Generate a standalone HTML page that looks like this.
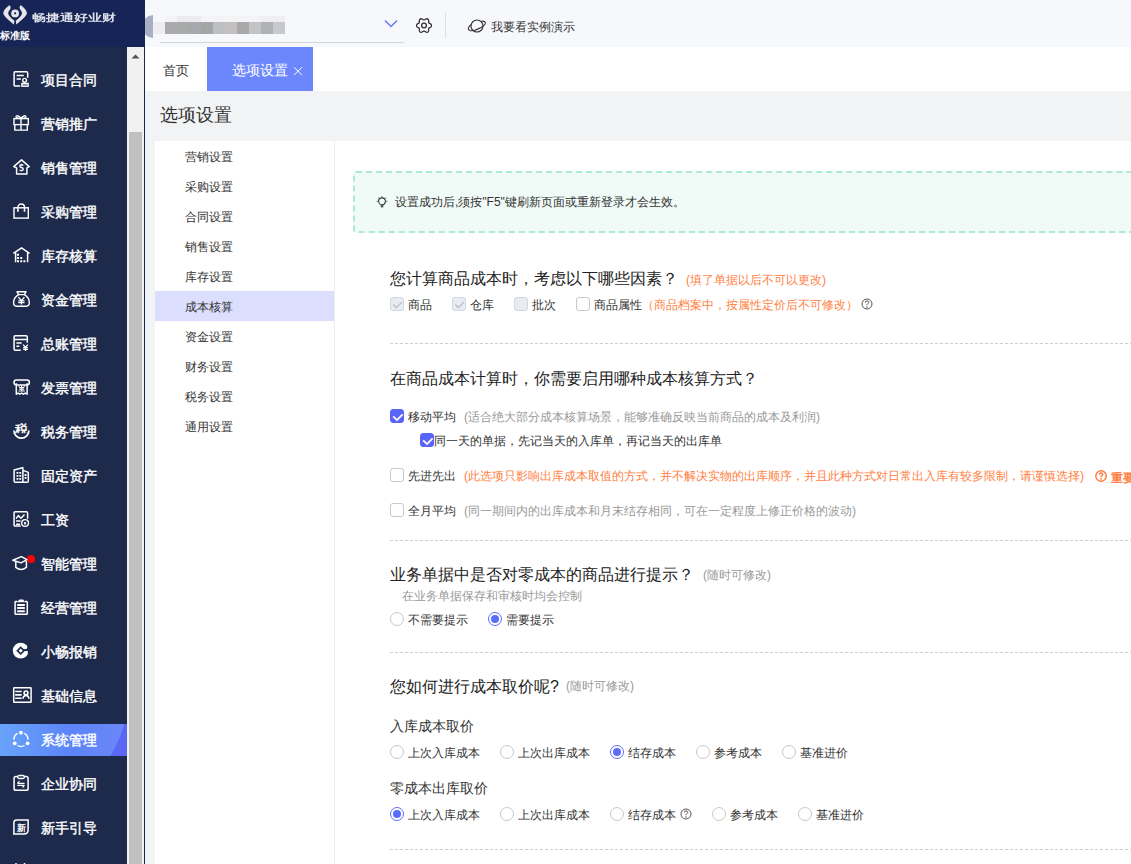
<!DOCTYPE html>
<html><head><meta charset="utf-8">
<style>
*{box-sizing:border-box;margin:0;padding:0}
html,body{width:1131px;height:864px;overflow:hidden;background:#fff;font-family:"Liberation Sans",sans-serif;color:#333}
.abs{position:absolute}
#side{position:absolute;left:0;top:0;width:145px;height:864px;background:#1e2a4c;overflow:hidden}
#logo{position:absolute;left:0;top:0;width:145px;height:47px;background:#162456}
.mi{position:absolute;left:0;width:127px;height:32px}
.mi.act{overflow:hidden;background:#5a66f5}
.mi.act::before{content:"";position:absolute;left:-123px;top:-160px;width:252px;height:252px;border-radius:50%;background:linear-gradient(90deg,#68a3f9 0,#68a3f9 123px,#5c84f8 195px,#6c88f8 250px)}
.mi .ic{z-index:1;position:absolute;left:13px;top:7px;width:16px;height:16px;overflow:visible}
.mi .tx{z-index:1;position:absolute;left:41px;top:0;line-height:32px;font-size:14px;color:#fff;white-space:nowrap;font-weight:normal;-webkit-text-stroke:0.4px #fff}
#sb{position:absolute;left:127px;top:47px;width:17px;height:817px;background:#f1f1f1}
#thumb{position:absolute;left:129px;top:132px;width:13px;height:732px;background:#c1c1c1}
#sbline{position:absolute;left:144px;top:0;width:1px;height:864px;background:#162456}
#top{position:absolute;left:145px;top:0;width:986px;height:47px;background:#f7f8fc}
#tabs{position:absolute;left:145px;top:47px;width:986px;height:44px;background:#fff}
#ttl{position:absolute;left:145px;top:91px;width:986px;height:50px;background:#f2f3f5}
#wrap{position:absolute;left:145px;top:141px;width:986px;height:723px;background:#f2f3f5}
#sub{position:absolute;left:155px;top:141px;width:179px;height:723px;background:#fff}
#subline{position:absolute;left:334px;top:141px;width:1px;height:723px;background:#eeeeee}
#main{position:absolute;left:335px;top:141px;width:796px;height:723px;background:#fff}
.si{position:absolute;left:155px;width:179px;height:30px;line-height:30px;font-size:12px;color:#333;padding:1px 0 0 30px}
.si.on{background:#dbdefd}
.t{position:absolute;white-space:nowrap;line-height:20px}
.q{font-size:16px;color:#222;line-height:24px}
.s12{font-size:12px;line-height:18px}
.gray{color:#999}
.org{color:#ff7f3f}
.dash{position:absolute;left:390px;width:741px;height:1px;background:repeating-linear-gradient(90deg,#c4d4d4 0 3px,transparent 3px 5px)}
.cb{position:absolute;width:14px;height:14px;border:1px solid #c8c8c8;border-radius:3px;background:#fff}
.cb.dis{background:#e9ecf3;border-color:#d2d6de}
.cb.on{background:#5865f8;border-color:#5865f8}
.rd{position:absolute;width:14px;height:14px;border:1px solid #c8c8c8;border-radius:50%;background:#fff}
.rd.on{border-color:#5b6cf9}
.rd.on::after{content:"";position:absolute;left:2px;top:2px;width:8px;height:8px;border-radius:50%;background:#5b6cf9}
</style></head><body>
<div id="side">
  <div id="logo">
    <svg class="abs" style="left:0;top:0" width="32" height="30" viewBox="0 0 32 30">
      <path id="lw" d="M9.4 5.2C7 7 3.3 10 3.3 13.2C3.5 16 10 21 13.9 24.6L14.4 20.8C11 18 8.2 15.5 8.2 13.2C8.2 11 10.6 9.5 10.6 8C10.8 6.5 10.2 5.5 9.4 5.2Z" fill="#e6e6ea"/>
      <path d="M20.8 5.2C23.2 7 26.9 10 26.9 13.2C26.7 16 20.2 21 16.3 24.6L15.8 20.8C19.2 18 22 15.5 22 13.2C22 11 19.6 9.5 19.6 8C19.4 6.5 20 5.5 20.8 5.2Z" fill="#e6e6ea"/>
      <circle cx="15.1" cy="13.4" r="3.9" fill="#e6e6ea"/><circle cx="15.1" cy="13.3" r="1.1" fill="#162456"/>
    </svg>
    <div class="abs" style="left:32px;top:9px;font-size:14px;color:#e2e2ea;line-height:16px;white-space:nowrap;transform:scaleY(0.72);transform-origin:0 50%;font-weight:bold">畅捷通好业财</div>
    <div class="abs" style="left:0px;top:29px;font-size:10px;color:#fff;font-weight:bold;line-height:14px;white-space:nowrap">标准版</div>
  </div>
<div class="mi" style="top:64px"><svg class="ic" viewBox="0 0 16 16"><path d="M7.2 15.1H2.3Q1.1 15.1 1.1 13.9V2Q1.1 0.8 2.3 0.8H13.5Q14.7 0.8 14.7 2V6.7" stroke="#fff" fill="none" stroke-width="1.5"/><path d="M3.6 4.6h7.2M3.6 8h4.3" stroke="#fff" fill="none" stroke-width="1.5"/><circle cx="11.6" cy="9.3" r="1.9" stroke="#fff" fill="none" stroke-width="1.4"/><rect x="8.9" y="12.5" width="6.2" height="2.7" stroke="#fff" fill="none" stroke-width="1.4"/><rect x="10" y="13.4" width="4" height="1" fill="#b8bccb"/></svg><div class="tx">项目合同</div></div>
<div class="mi" style="top:108px"><svg class="ic" viewBox="0 0 16 16"><rect x="1" y="3.6" width="14.3" height="6" stroke="#fff" fill="none" stroke-width="1.4"/><path d="M1.8 9.6V15.1H14.3V9.6M8 3.6V15.1" stroke="#fff" fill="none" stroke-width="1.4"/><path d="M8 3.6C6.5 1.2 4.5 0.3 3.4 1S3.3 3.3 8 3.6C9.5 1.2 11.5 0.3 12.6 1S12.7 3.3 8 3.6" stroke="#fff" fill="none" stroke-width="1.3"/></svg><div class="tx">营销推广</div></div>
<div class="mi" style="top:152px"><svg class="ic" viewBox="0 0 16 16"><path d="M8.5 0.9L16.2 7.6L13.9 8.9V15.1H3.6V8.9L0.8 7.6Z" stroke="#fff" fill="none" stroke-width="1.5" stroke-linejoin="round"/><path d="M10.1 6.7Q9.7 5.7 8.4 5.7Q6.8 5.7 6.8 7Q6.8 8.2 8.5 8.5Q10.2 8.9 10.2 10.2Q10.2 11.6 8.4 11.6Q7 11.6 6.7 10.6M8.5 4.7v1M8.5 11.6v1" stroke="#fff" fill="none" stroke-width="1.4"/></svg><div class="tx">销售管理</div></div>
<div class="mi" style="top:196px"><svg class="ic" viewBox="0 0 16 16"><rect x="1" y="4.8" width="14.3" height="10.3" stroke="#fff" fill="none" stroke-width="1.4"/><path d="M4.9 7.9V4.3A3.3 3.3 0 0 1 11.5 4.3V7.9" stroke="#fff" fill="none" stroke-width="1.4"/><circle cx="4.9" cy="7.9" r="0.9" fill="#fff"/><circle cx="11.5" cy="7.9" r="0.9" fill="#fff"/></svg><div class="tx">采购管理</div></div>
<div class="mi" style="top:240px"><svg class="ic" viewBox="0 0 16 16"><path d="M0.4 6.3L8.5 0.9L16.6 6.3M2.6 5V15.3M14.6 5V15.3" stroke="#fff" fill="none" stroke-width="1.5"/><path d="M4 6.8h2v1.9H4zM4 10h2v2H4zM7.2 10h2v2H7.2zM4 13.3h2v2H4zM7.2 13.3h2v2H7.2zM10.4 13.3h2v2h-2z" fill="#fff"/></svg><div class="tx">库存核算</div></div>
<div class="mi" style="top:284px"><svg class="ic" viewBox="0 0 16 16"><path d="M4 0.8H13L11.3 3.6H5.7Z" stroke="#fff" fill="none" stroke-width="1.4" stroke-linejoin="round"/><path d="M5.6 3.6Q0.6 6.5 0.6 11.5Q0.6 15.2 3.5 15.2H13.4Q16.3 15.2 16.3 11.5Q16.3 6.5 11.4 3.6" stroke="#fff" fill="none" stroke-width="1.4"/><path d="M5.4 6.2l3 3.4 3-3.4M8.4 9.6v4M5.3 9.9h6.2M5.3 11.6h6.2" stroke="#fff" fill="none" stroke-width="1.3"/></svg><div class="tx">资金管理</div></div>
<div class="mi" style="top:328px"><svg class="ic" viewBox="0 0 16 16"><path d="M7.7 15.3H2.3Q1.07 15.3 1.07 14V2.1Q1.07 0.8 2.3 0.8H13.1Q14.3 0.8 14.3 2.1V7.7" stroke="#fff" fill="none" stroke-width="1.5"/><path d="M1.07 4.6H14.3M3.4 7.95h5.2M3.4 11.3h3" stroke="#fff" fill="none" stroke-width="1.5"/><path d="M10.1 9.6l2.4 2.6 2.4-2.6M12.5 12.2v3.7M10.1 12.6h4.8M10.1 14.3h4.8" stroke="#fff" fill="none" stroke-width="1.3"/></svg><div class="tx">总账管理</div></div>
<div class="mi" style="top:372px"><svg class="ic" viewBox="0 0 16 16"><rect x="1" y="1" width="15.4" height="4.9" rx="2.4" stroke="#fff" fill="none" stroke-width="1.5"/><path d="M3.3 4.2V15.2L5.1 14.1 6.9 15.2 8.7 14.1 10.5 15.2 12.3 14.1 14.1 15.2V4.2" stroke="#fff" fill="none" stroke-width="1.5" stroke-linejoin="round"/><path d="M5.6 6.6L6.6 7.6M11.8 6.6L10.8 7.6M8.7 6.3V12.2M6.2 8.6h5M6.2 10.2h5M5.6 12h6.2" stroke="#fff" fill="none" stroke-width="1.1"/></svg><div class="tx">发票管理</div></div>
<div class="mi" style="top:416px"><svg class="ic" viewBox="0 0 16 16"><defs><clipPath id="c8"><rect x="0" y="-1" width="17" height="11.3"/></clipPath></defs><path d="M0.9 7.4A7.5 7.8 0 0 0 15.9 7.4" stroke="#fff" fill="none" stroke-width="1.7"/><text x="8.3" y="11.2" font-size="12.5" text-anchor="middle" fill="#fff" font-weight="bold" clip-path="url(#c8)">税</text></svg><div class="tx">税务管理</div></div>
<div class="mi" style="top:460px"><svg class="ic" viewBox="0 0 16 16"><path d="M10.5 0.5L1.1 3V14Q1.1 15.3 2.4 15.3H14Q15.3 15.3 15.3 14V5.4L10.2 3.4M9.9 1V15" stroke="#fff" fill="none" stroke-width="1.5" stroke-linejoin="round"/><path d="M3.5 5h1.9v1.8H3.5zM6.3 5h1.9v1.8H6.3zM3.5 7.9h1.9v1.8H3.5zM6.3 7.9h1.9v1.8H6.3zM3.5 10.9h1.9v1.8H3.5zM6.3 10.9h1.9v1.8H6.3zM11.6 7.1h1.9v1.8h-1.9zM11.6 9.9h1.9v1.8h-1.9z" fill="#fff"/></svg><div class="tx">固定资产</div></div>
<div class="mi" style="top:504px"><svg class="ic" viewBox="0 0 16 16"><path d="M7.7 15.1H2.3Q1.07 15.1 1.07 13.9V2.1Q1.07 0.8 2.3 0.8H13.3Q14.6 0.8 14.6 2.1V7.7" stroke="#fff" fill="none" stroke-width="1.5"/><path d="M3.1 7.4L5.4 4.6L8 7.2L11.5 3.4M3.1 10h4.4M3.1 13.3h4" stroke="#fff" fill="none" stroke-width="1.5"/><circle cx="12.1" cy="12" r="3.4" stroke="#fff" fill="none" stroke-width="1.4"/><path d="M11 10.8l1.1 1.3 1.1-1.3M12.1 12.1v1.9M11 12.6h2.2" stroke="#fff" fill="none" stroke-width="0.9"/></svg><div class="tx">工资</div></div>
<div class="mi" style="top:548px"><svg class="ic" viewBox="0 0 16 16"><path d="M-0.2 5.2L8.4 1.6L13.9 4.6L8.1 7.9Z" stroke="#fff" fill="none" stroke-width="1.5" stroke-linejoin="round"/><path d="M2.8 6.3V12.3Q8 16.5 13.4 12.3V6" stroke="#fff" fill="none" stroke-width="1.5"/></svg><div class="tx">智能管理</div></div>
<div class="mi" style="top:592px"><svg class="ic" viewBox="0 0 16 16"><path d="M4.6 2.4H2.8Q2.1 2.4 2.1 3.2V14.5Q2.1 15.3 2.8 15.3H13.6Q14.3 15.3 14.3 14.5V3.2Q14.3 2.4 13.6 2.4H11.8" stroke="#fff" fill="none" stroke-width="1.5"/><path d="M4.4 3.2L6.3 0.4H10.2L12 3.2Z" fill="#fff"/><path d="M4.2 6h7.6M4.2 9h7.6M4.2 12.3h7.6" stroke="#fff" fill="none" stroke-width="1.9"/></svg><div class="tx">经营管理</div></div>
<div class="mi" style="top:636px"><svg class="ic" viewBox="0 0 16 16"><defs><mask id="m13" maskUnits="userSpaceOnUse" x="-2" y="-2" width="20" height="20"><rect x="-2" y="-2" width="20" height="20" fill="#fff"/><path d="M3.3 7.7L7.7 3.3L12.1 7.7L7.7 12.1Z" fill="#000"/><path d="M7.7 7.95H19V-1Z" fill="#000"/><rect x="14.8" y="7" width="4" height="10" fill="#000"/></mask></defs><circle cx="7.7" cy="7.7" r="7.9" fill="#fff" mask="url(#m13)"/><circle cx="12.2" cy="4.1" r="2.2" fill="#fff"/><path d="M5.6 7.7L7.7 5.6L9.8 7.7L7.7 9.8Z" fill="#fff"/></svg><div class="tx">小畅报销</div></div>
<div class="mi" style="top:680px"><svg class="ic" viewBox="0 0 16 16"><rect x="0.7" y="0.7" width="17.4" height="14.6" rx="0.6" stroke="#fff" fill="none" stroke-width="1.5"/><path d="M2.2 4.5h6.5M2.2 7.9h6.5M2.2 11.3h6.5" stroke="#fff" fill="none" stroke-width="1.6"/><circle cx="13" cy="5.9" r="1.9" stroke="#fff" fill="none" stroke-width="1.6"/><path d="M10 11.8Q10.2 8.4 13 8.4Q15.8 8.4 16 11.8" stroke="#fff" fill="none" stroke-width="1.5"/></svg><div class="tx">基础信息</div></div>
<div class="mi act" style="top:724px"><svg class="ic" viewBox="0 0 16 16"><path d="M4.6 2.4A7 7 0 0 0 0.9 8.8M15 8.8A7 7 0 0 0 11.3 2.4M4.4 14.5A7 7 0 0 0 11.5 14.5" stroke="#fff" fill="none" stroke-width="1.4"/><circle cx="7.95" cy="1.7" r="1.9" fill="#fff"/><circle cx="1.7" cy="12.3" r="1.9" fill="#fff"/><circle cx="14.6" cy="12.3" r="1.9" fill="#fff"/></svg><div class="tx">系统管理</div></div>
<div class="mi" style="top:768px"><svg class="ic" viewBox="0 0 16 16"><path d="M4.2 1.6H3Q1.07 1.6 1.07 3.4V13.4Q1.07 15.3 3 15.3H13.2Q15.1 15.3 15.1 13.4V3.4Q15.1 1.6 13.2 1.6H11.7" stroke="#fff" fill="none" stroke-width="1.5"/><rect x="4.6" y="0.5" width="6.8" height="3" rx="1.5" stroke="#fff" fill="none" stroke-width="1.3"/><path d="M4.3 8.4H11.6M4.5 8.4L6.5 6.2M4.3 10.4H11.6M11.4 10.4L9.5 12.5" stroke="#fff" fill="none" stroke-width="1.15"/></svg><div class="tx">企业协同</div></div>
<div class="mi" style="top:812px"><svg class="ic" viewBox="0 0 16 16"><path d="M3.5 0.9H15.1V11Q15.1 15 11 15H0.9V3.5Q0.9 0.9 3.5 0.9Z" stroke="#fff" fill="none" stroke-width="1.5"/><text x="8" y="11.6" font-size="8.5" text-anchor="middle" fill="#fff" font-weight="bold">新</text></svg><div class="tx">新手引导</div></div>
<div class="mi" style="top:856px"><svg class="ic" viewBox="0 0 16 16"><path d="M3 0v3M11.5 0v3" stroke="#fff" fill="none" stroke-width="1.5"/></svg><div class="tx">更多</div></div>
<div class="abs" style="left:27px;top:555px;width:8px;height:8px;border-radius:50%;background:#fd0202"></div>
</div>
<div id="sb"><svg class="abs" style="left:4px;top:7px" width="9" height="5" viewBox="0 0 9 5"><path d="M0.5 4.5L4.5 0.5L8.5 4.5z" fill="#505050"/></svg></div>
<div id="thumb"></div>
<div id="sbline"></div>
<div id="top">
  <div class="abs" style="left:0;top:15px;width:8px;height:23px;overflow:hidden"><div style="position:absolute;left:-3px;top:0;width:23px;height:23px;border-radius:50%;background:#a9b0c6"></div></div>
  <div class="abs" style="left:15px;top:42px;width:244px;height:1px;background:#d4d6dc"></div>
  <div class="abs" style="left:20px;top:16px;width:120px;height:6px;background:#f4f4f7"></div><div class="abs" style="left:32px;top:16px;width:24px;height:6px;background:#ececef"></div><div class="abs" style="left:116px;top:16px;width:24px;height:6px;background:#efeff2"></div>
  <div class="abs" style="left:8px;top:22px;width:12px;height:12px;background:#ededef"></div>
  <div class="abs" style="left:20px;top:22px;width:12px;height:12px;background:#aaaaac"></div>
  <div class="abs" style="left:32px;top:22px;width:12px;height:12px;background:#a9abaa"></div>
  <div class="abs" style="left:44px;top:22px;width:12px;height:12px;background:#a5a8ad"></div>
  <div class="abs" style="left:56px;top:22px;width:12px;height:12px;background:#a4a5a7"></div>
  <div class="abs" style="left:68px;top:22px;width:12px;height:12px;background:#bdbfc1"></div>
  <div class="abs" style="left:80px;top:22px;width:12px;height:12px;background:#c4c0c1"></div>
  <div class="abs" style="left:92px;top:22px;width:12px;height:12px;background:#a9a9ab"></div>
  <div class="abs" style="left:104px;top:22px;width:12px;height:12px;background:#c3c5c4"></div>
  <div class="abs" style="left:116px;top:22px;width:12px;height:12px;background:#afb2b5"></div>
  <div class="abs" style="left:128px;top:22px;width:12px;height:12px;background:#c7c9ce"></div>
  <svg class="abs" style="left:239px;top:19px" width="14" height="9" viewBox="0 0 14 9"><path d="M1 1.5L7 7.5L13 1.5" fill="none" stroke="#6877f4" stroke-width="1.5"/></svg>
  <svg class="abs" style="left:271px;top:18px" width="16" height="15" viewBox="0 0 16 15"><path d="M15.60 7.50 L15.44 8.15 L14.99 8.73 L14.38 9.21 L13.73 9.59 L13.20 9.92 L12.85 10.30 L12.70 10.79 L12.67 11.42 L12.67 12.17 L12.56 12.94 L12.28 13.62 L11.80 14.08 L11.16 14.27 L10.43 14.17 L9.71 13.88 L9.06 13.51 L8.50 13.21 L8.00 13.10 L7.50 13.21 L6.94 13.51 L6.29 13.88 L5.57 14.17 L4.84 14.27 L4.20 14.08 L3.72 13.62 L3.44 12.94 L3.33 12.17 L3.33 11.42 L3.30 10.79 L3.15 10.30 L2.80 9.92 L2.27 9.59 L1.62 9.21 L1.01 8.73 L0.56 8.15 L0.40 7.50 L0.56 6.85 L1.01 6.27 L1.62 5.79 L2.27 5.41 L2.80 5.08 L3.15 4.70 L3.30 4.21 L3.33 3.58 L3.33 2.83 L3.44 2.06 L3.72 1.38 L4.20 0.92 L4.84 0.73 L5.57 0.83 L6.29 1.12 L6.94 1.49 L7.50 1.79 L8.00 1.90 L8.50 1.79 L9.06 1.49 L9.71 1.12 L10.43 0.83 L11.16 0.73 L11.80 0.92 L12.28 1.38 L12.56 2.06 L12.67 2.83 L12.67 3.58 L12.70 4.21 L12.85 4.70 L13.20 5.08 L13.73 5.41 L14.38 5.79 L14.99 6.27 L15.44 6.85 L15.60 7.50Z" fill="none" stroke="#333" stroke-width="1.3" stroke-linejoin="round"/><circle cx="8" cy="7.5" r="2.4" fill="none" stroke="#333" stroke-width="1.3"/></svg>
  <div class="abs" style="left:300px;top:13px;width:1px;height:25px;background:#dcdde2"></div>
  <svg class="abs" style="left:322px;top:18px" width="20" height="16" viewBox="0 0 20 16"><circle cx="10" cy="8" r="6" fill="none" stroke="#333" stroke-width="1.1"/><path d="M4.2 6.5Q-1 11 3 12.5Q7 13.5 14 9.5Q20.5 5.5 17.5 3.5Q16 2.8 14.5 3.3" fill="none" stroke="#333" stroke-width="1.1"/></svg>
  <div class="abs" style="left:346px;top:18px;font-size:12px;color:#333;line-height:18px;white-space:nowrap">我要看实例演示</div>
</div>
<div id="tabs">
  <div class="abs" style="left:18px;top:15px;font-size:13px;color:#333;line-height:18px">首页</div>
  <div class="abs" style="left:62px;top:0;width:106px;height:44px;background:#6c87fd"></div>
  <div class="abs" style="left:87px;top:14px;font-size:14px;color:#fff;line-height:18px;white-space:nowrap">选项设置</div>
  <svg class="abs" style="left:148px;top:19px" width="10" height="10" viewBox="0 0 10 10"><path d="M1 1.2L9 9.2M9 1.2L1 9.2" stroke="#fff" stroke-width="1"/></svg>
</div>
<div id="ttl"><div class="abs" style="left:15px;top:12px;font-size:18px;color:#333;line-height:24px">选项设置</div></div>
<div id="wrap"></div>
<div id="sub"></div>
<div id="subline"></div>
<div id="main"></div>
<div class="si" style="top:141px">营销设置</div>
<div class="si" style="top:171px">采购设置</div>
<div class="si" style="top:201px">合同设置</div>
<div class="si" style="top:231px">销售设置</div>
<div class="si" style="top:261px">库存设置</div>
<div class="si on" style="top:291px">成本核算</div>
<div class="si" style="top:321px">资金设置</div>
<div class="si" style="top:351px">财务设置</div>
<div class="si" style="top:381px">税务设置</div>
<div class="si" style="top:411px">通用设置</div>
<div class="abs" style="left:353px;top:171px;width:800px;height:62px;background:#f0faf6;border:2px dashed #ade9cc;border-radius:3px"></div>
<svg class="abs" style="left:375px;top:194px" width="14" height="16" viewBox="0 0 14 16"><circle cx="7" cy="7.3" r="3.4" fill="none" stroke="#333" stroke-width="1.1"/><path d="M5.6 10.9h2.8v1.5q0 1-1 1h-.8q-1 0-1-1z" fill="#555"/><path d="M7 2.2v1M1.6 7.3h1.1M11.3 7.3h1.1M3.2 3.5l.7.7M10.8 3.5l-.7.7" stroke="#555" stroke-width="1"/></svg>
<div class="t s12" style="left:395px;top:193px;color:#333">设置成功后,须按"F5"键刷新页面或重新登录才会生效。</div>
<div class="t q" style="left:390px;top:267px;">您计算商品成本时，考虑以下哪些因素？</div>
<div class="t s12 org" style="left:686px;top:271px;">(填了单据以后不可以更改)</div>
<div class="cb dis chk" style="left:390px;top:297px"><svg width="14" height="14" viewBox="0 0 14 14" style="position:absolute;left:-1px;top:-1px"><path d="M3.2 7.4L6.4 10.6L12 5" fill="none" stroke="#c2c4c9" stroke-width="1.5"/></svg></div>
<div class="t s12" style="left:408px;top:296px;">商品</div>
<div class="cb dis chk" style="left:452px;top:297px"><svg width="14" height="14" viewBox="0 0 14 14" style="position:absolute;left:-1px;top:-1px"><path d="M3.2 7.4L6.4 10.6L12 5" fill="none" stroke="#c2c4c9" stroke-width="1.5"/></svg></div>
<div class="t s12" style="left:470px;top:296px;">仓库</div>
<div class="cb dis" style="left:514px;top:297px"></div>
<div class="t s12" style="left:532px;top:296px;">批次</div>
<div class="cb " style="left:576px;top:297px"></div>
<div class="t s12" style="left:594px;top:296px;">商品属性</div>
<div class="t s12 org" style="left:642px;top:296px;">（商品档案中，按属性定价后不可修改）</div>
<svg class="abs" style="left:861px;top:298px;overflow:visible" width="12" height="12" viewBox="0 0 12 12"><circle cx="6" cy="6" r="5.0" fill="none" stroke="#555" stroke-width="1"/><path d="M4.3 4.6Q4.3 2.9 6 2.9Q7.7 2.9 7.7 4.5Q7.7 5.4 6.6 5.9Q6 6.2 6 7.2" fill="none" stroke="#555" stroke-width="1"/><circle cx="6" cy="8.9" r="0.75" fill="#555"/></svg>
<div class="dash" style="top:343px"></div>
<div class="t q" style="left:390px;top:367px;">在商品成本计算时，你需要启用哪种成本核算方式？</div>
<div class="cb on" style="left:390px;top:409px"><svg width="14" height="14" viewBox="0 0 14 14" style="position:absolute;left:-1px;top:-1px"><path d="M3.2 7.4L7 11.1L12.6 5.4" fill="none" stroke="#fff" stroke-width="1.8"/></svg></div>
<div class="t s12" style="left:408px;top:408px;">移动平均</div>
<div class="t s12 gray" style="left:464px;top:408px;">(适合绝大部分成本核算场景，能够准确反映当前商品的成本及利润)</div>
<div class="cb on" style="left:420px;top:433px"><svg width="14" height="14" viewBox="0 0 14 14" style="position:absolute;left:-1px;top:-1px"><path d="M3.2 7.4L7 11.1L12.6 5.4" fill="none" stroke="#fff" stroke-width="1.8"/></svg></div>
<div class="t s12" style="left:434px;top:432px;">同一天的单据，先记当天的入库单，再记当天的出库单</div>
<div class="cb " style="left:390px;top:468px"></div>
<div class="t s12" style="left:408px;top:467px;">先进先出</div>
<div class="t s12 org" style="left:464px;top:467px;">(此选项只影响出库成本取值的方式，并不解决实物的出库顺序，并且此种方式对日常出入库有较多限制，请谨慎选择)</div>
<svg class="abs" style="left:1095px;top:470px;overflow:visible" width="12" height="12" viewBox="0 0 12 12"><circle cx="6" cy="6" r="5.2" fill="none" stroke="#ff7f3f" stroke-width="1.5"/><path d="M4.3 4.6Q4.3 2.9 6 2.9Q7.7 2.9 7.7 4.5Q7.7 5.4 6.6 5.9Q6 6.2 6 7.2" fill="none" stroke="#ff7f3f" stroke-width="1.5"/><circle cx="6" cy="8.9" r="0.875" fill="#ff7f3f"/></svg>
<div class="t s12 org" style="left:1111px;top:469px;font-weight:bold">重要</div>
<div class="cb " style="left:390px;top:503px"></div>
<div class="t s12" style="left:408px;top:502px;">全月平均</div>
<div class="t s12 gray" style="left:464px;top:502px;">(同一期间内的出库成本和月末结存相同，可在一定程度上修正价格的波动)</div>
<div class="dash" style="top:540px"></div>
<div class="t q" style="left:390px;top:563px;">业务单据中是否对零成本的商品进行提示？</div>
<div class="t s12 gray" style="left:703px;top:566px;">(随时可修改)</div>
<div class="t s12 gray" style="left:402px;top:587px;">在业务单据保存和审核时均会控制</div>
<div class="rd" style="left:390px;top:612px"></div>
<div class="t s12" style="left:408px;top:611px;">不需要提示</div>
<div class="rd on" style="left:488px;top:612px"></div>
<div class="t s12" style="left:506px;top:611px;">需要提示</div>
<div class="dash" style="top:652px"></div>
<div class="t q" style="left:390px;top:675px;">您如何进行成本取价呢?</div>
<div class="t s12 gray" style="left:566px;top:677px;">(随时可修改)</div>
<div class="t s12" style="left:390px;top:717px;font-size:14px">入库成本取价</div>
<div class="rd" style="left:390px;top:745px"></div>
<div class="t s12" style="left:408px;top:744px;">上次入库成本</div>
<div class="rd" style="left:500px;top:745px"></div>
<div class="t s12" style="left:518px;top:744px;">上次出库成本</div>
<div class="rd on" style="left:610px;top:745px"></div>
<div class="t s12" style="left:628px;top:744px;">结存成本</div>
<div class="rd" style="left:696px;top:745px"></div>
<div class="t s12" style="left:714px;top:744px;">参考成本</div>
<div class="rd" style="left:782px;top:745px"></div>
<div class="t s12" style="left:800px;top:744px;">基准进价</div>
<div class="t s12" style="left:390px;top:779px;font-size:14px">零成本出库取价</div>
<div class="rd on" style="left:390px;top:807px"></div>
<div class="t s12" style="left:408px;top:806px;">上次入库成本</div>
<div class="rd" style="left:500px;top:807px"></div>
<div class="t s12" style="left:518px;top:806px;">上次出库成本</div>
<div class="rd" style="left:610px;top:807px"></div>
<div class="t s12" style="left:628px;top:806px;">结存成本</div>
<div class="rd" style="left:712px;top:807px"></div>
<div class="t s12" style="left:730px;top:806px;">参考成本</div>
<div class="rd" style="left:798px;top:807px"></div>
<div class="t s12" style="left:816px;top:806px;">基准进价</div>
<svg class="abs" style="left:680px;top:808px;overflow:visible" width="12" height="12" viewBox="0 0 12 12"><circle cx="6" cy="6" r="5.0" fill="none" stroke="#555" stroke-width="1"/><path d="M4.3 4.6Q4.3 2.9 6 2.9Q7.7 2.9 7.7 4.5Q7.7 5.4 6.6 5.9Q6 6.2 6 7.2" fill="none" stroke="#555" stroke-width="1"/><circle cx="6" cy="8.9" r="0.75" fill="#555"/></svg>
<div class="dash" style="top:849px"></div>
</body></html>
